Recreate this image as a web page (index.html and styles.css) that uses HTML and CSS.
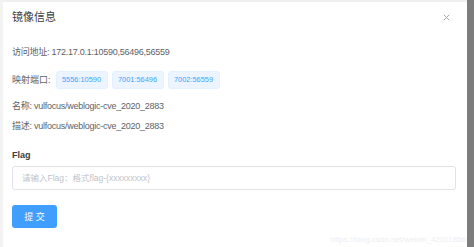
FILE: index.html
```html
<!DOCTYPE html>
<html lang="zh">
<head>
<meta charset="utf-8">
<title>镜像信息</title>
<link rel="stylesheet" href="styles.css">
</head>
<body>
<div class="page">
  <div class="left-strip"></div>
  <div class="dialog">
    <div class="header">
      <span class="title">镜像信息</span>
      <svg class="close" width="7" height="7" viewBox="0 0 7 7"><path d="M0.8 0.8L6.2 6.2M6.2 0.8L0.8 6.2" stroke="#a4a7ad" stroke-width="1" fill="none"/></svg>
    </div>
    <div class="row addr">访问地址: 172.17.0.1:10590,56496,56559</div>
    <div class="row ports">
      <span class="label">映射端口:</span>
      <span class="tag">5556:10590</span>
      <span class="tag">7001:56496</span>
      <span class="tag">7002:56559</span>
    </div>
    <div class="row name">名称: vulfocus/weblogic-cve_2020_2883</div>
    <div class="row desc">描述: vulfocus/weblogic-cve_2020_2883</div>
    <div class="flag-label">Flag</div>
    <input class="flag-input" type="text" placeholder="请输入Flag：格式flag-{xxxxxxxxx}">
    <button class="submit">提 交</button>
    <div class="watermark">https://blog.csdn.net/weixin_42011856</div>
  </div>
  <div class="right-bar"></div>
</div>
</body>
</html>
```
FILE: styles.css
```css
* { box-sizing: border-box; }
html, body { margin: 0; padding: 0; background: #fff; }
body {
  font-family: "Liberation Sans", "Noto Sans CJK SC", sans-serif;
  color: #606266;
  font-size: 9px;
}
.page {
  display: flex;
  width: 474px;
  height: 247px;
  overflow: hidden;
}
.left-strip {
  width: 3px;
  background: #f3f3f3;
}
.right-bar {
  width: 7px;
  background: #7d7d7d;
}
.dialog {
  position: relative;
  flex: 1;
  display: flex;
  flex-direction: column;
  align-items: flex-start;
  border-top: 2px solid #efefef;
  padding: 0 11px 0 9px;
  background: #fff;
}
.header {
  align-self: stretch;
  display: flex;
  justify-content: space-between;
  align-items: center;
  padding-top: 8px;
  height: 22px;
}
.title {
  font-size: 11px;
  line-height: 14px;
  color: #3a3c40;
}
.close { margin-right: 6px; }
.row {
  line-height: 14px;
  white-space: nowrap;
  letter-spacing: -0.25px;
}
.addr { margin-top: 21px; }
.ports {
  margin-top: 12px;
  display: flex;
  align-items: center;
  gap: 4px;
  height: 18px;
  letter-spacing: 0;
}
.ports .label { margin-right: 1px; }
.tag {
  display: inline-flex;
  align-items: center;
  justify-content: center;
  height: 18px;
  width: 52px;
  background: #ecf5ff;
  border: 1px solid #e3f0ff;
  border-radius: 3px;
  color: #409eff;
  font-size: 7.4px;
}
.name { margin-top: 10px; }
.desc { margin-top: 6px; }
.flag-label {
  margin-top: 15px;
  line-height: 14px;
  font-weight: bold;
  color: #3a3c40;
}
.flag-input {
  margin-top: 4px;
  align-self: stretch;
  height: 24px;
  border: 1px solid #dfe2e8;
  border-radius: 3px;
  padding: 0 9px;
  font-family: inherit;
  font-size: 8.5px;
  color: #606266;
  outline: none;
}
.flag-input::placeholder { color: #c0c4cc; }
.submit {
  margin-top: 15px;
  width: 45px;
  height: 23px;
  border: none;
  border-radius: 3px;
  background: #409eff;
  color: #fff;
  font-family: inherit;
  font-size: 9px;
  padding: 0;
}
.watermark {
  position: absolute;
  right: 1px;
  bottom: 3px;
  font-size: 8px;
  color: #eceef2;
  white-space: nowrap;
}
```
